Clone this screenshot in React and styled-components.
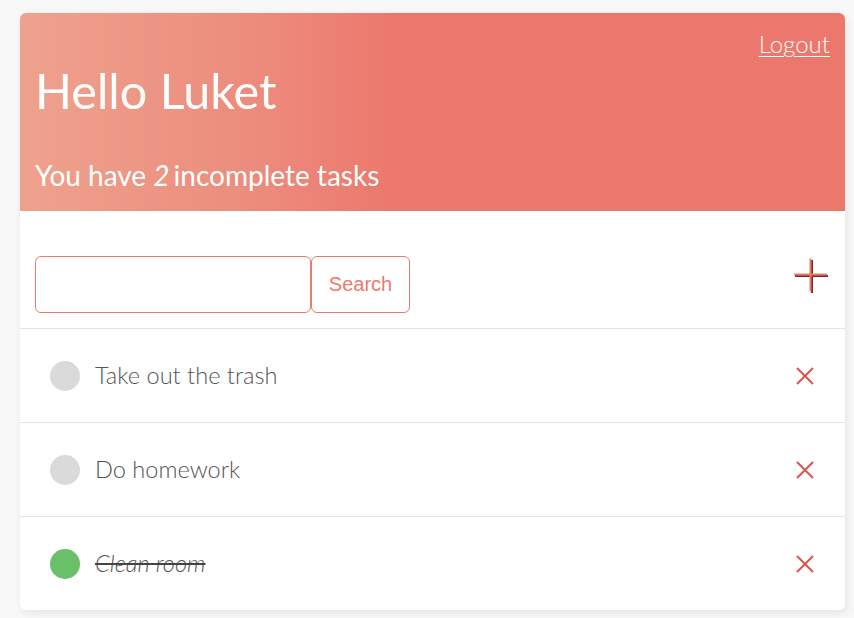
import React from "react";
import styled, { createGlobalStyle } from "styled-components";

const Global = createGlobalStyle`
  body {
    margin: 0;
    background: #f8f8f8;
    font-family: Lato, "Noto Sans", sans-serif;
  }
`;

const Page = styled.div`
  padding: 13px 9px 10px 20px;
`;

const Card = styled.div`
  background: #fff;
  border-radius: 6px;
  box-shadow: 2px 3px 10px rgba(0, 0, 0, 0.08);
  overflow: hidden;
`;

const Header = styled.div`
  height: 198px;
  box-sizing: border-box;
  padding: 17px 15px 0 15px;
  color: #fff;
  background: linear-gradient(90deg, #eea28d 0%, #ec8a7c 30%, #ec786d 45%, #ec786d 100%);
  display: flex;
  flex-direction: column;
`;

const Logout = styled.a`
  align-self: flex-end;
  color: #fff;
  font-size: 24px;
  font-weight: 300;
  line-height: 1.2;
  text-decoration: underline;
  text-underline-offset: 3px;
  text-decoration-thickness: 1px;
  cursor: pointer;
`;

const Title = styled.h1`
  margin: 2px 0 0 0;
  font-size: 48.5px;
  font-weight: 400;
  line-height: 1.2;
`;

const Subtitle = styled.p`
  margin: 39px 0 0 0;
  font-size: 28px;
  font-weight: 400;
  em {
    font-style: italic;
    margin-right: 4px;
  }
`;

const SearchBar = styled.div`
  display: flex;
  align-items: center;
  padding: 45px 16px 15px 15px;
  border-bottom: 1px solid #e2e2e2;
`;

const Input = styled.input`
  width: 276px;
  height: 57px;
  box-sizing: border-box;
  border: 1px solid #ec7a6d;
  border-radius: 6px;
  outline: none;
  font-size: 18px;
  padding: 0 10px;
`;

const SearchButton = styled.button`
  height: 57px;
  width: 99px;
  box-sizing: border-box;
  border: 1px solid #ec7a6d;
  border-radius: 6px;
  background: #fff;
  color: #ec7a6d;
  font-family: "Liberation Sans", Arial, sans-serif;
  font-size: 20px;
`;

const AddButton = styled.button`
  margin-left: auto;
  margin-top: -20px;
  border: none;
  background: none;
  padding: 0;
  width: 36px;
  height: 36px;
  cursor: pointer;
`;

const Row = styled.div`
  display: flex;
  align-items: center;
  height: 93px;
  padding: 0 30px 0 30px;
  & + & {
    border-top: 1px solid #e2e2e2;
  }
`;

const Dot = styled.span`
  width: 30px;
  height: 30px;
  border-radius: 50%;
  background: ${(p) => (p.$done ? "#6abf69" : "#dadada")};
  flex-shrink: 0;
`;

const TaskText = styled.span`
  margin-left: 15px;
  margin-top: -2px;
  font-size: 23.6px;
  font-weight: 300;
  color: #555;
  font-style: ${(p) => (p.$done ? "italic" : "normal")};
  text-decoration: ${(p) => (p.$done ? "line-through" : "none")};
  text-decoration-thickness: 2px;
  text-decoration-color: #444;
`;

const Remove = styled.button`
  margin-left: auto;
  border: none;
  background: none;
  padding: 0;
  width: 20px;
  height: 20px;
  cursor: pointer;
`;

const tasks = [
  { name: "Take out the trash", done: false },
  { name: "Do homework", done: false },
  { name: "Clean room", done: true },
];

export default function App() {
  return (
    <Page>
      <Global />
      <Card>
        <Header>
          <Logout>Logout</Logout>
          <Title>Hello Luket</Title>
          <Subtitle>
            You have <em>2</em>incomplete tasks
          </Subtitle>
        </Header>
        <SearchBar>
          <Input />
          <SearchButton>Search</SearchButton>
          <AddButton>
            <svg width="36" height="36" viewBox="0 0 36 36">
              <path d="M19 3v33M2 19h33" stroke="#7a2b26" strokeWidth="2" />
              <path d="M17.5 1.5v33M1 17.5h33" stroke="#ec7a6d" strokeWidth="2" />
            </svg>
          </AddButton>
        </SearchBar>
        {tasks.map((t) => (
          <Row key={t.name}>
            <Dot $done={t.done} />
            <TaskText $done={t.done}>{t.name}</TaskText>
            <Remove>
              <svg width="20" height="20" viewBox="0 0 20 20">
                <path d="M2 2l16 16M18 2L2 18" stroke="#d9534f" strokeWidth="2" />
              </svg>
            </Remove>
          </Row>
        ))}
      </Card>
    </Page>
  );
}
